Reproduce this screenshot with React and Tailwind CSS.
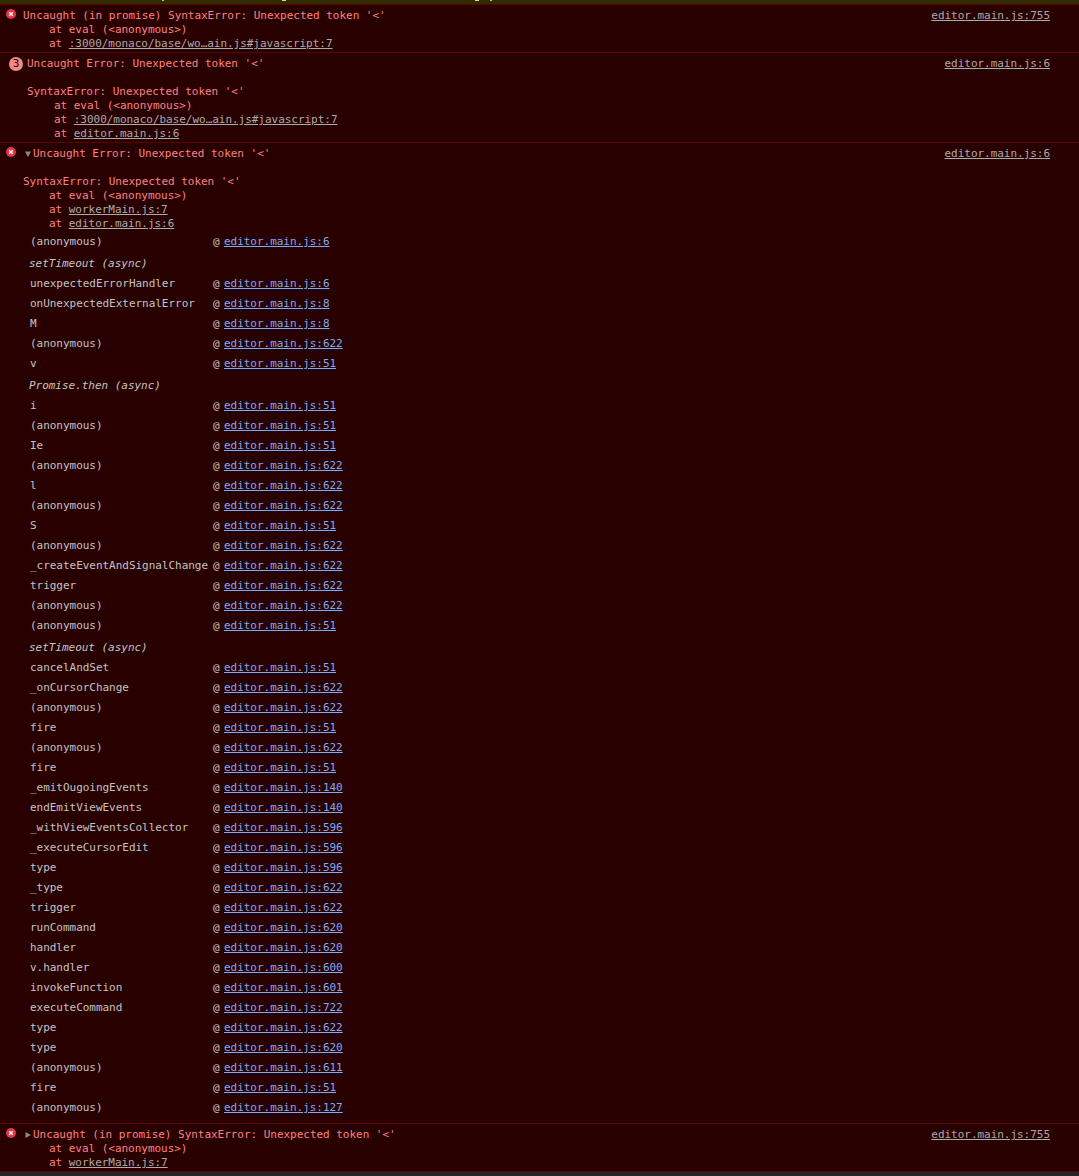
import React from "react";

const stack1 = [
  ["(anonymous)", "editor.main.js:6"],
  { async: "setTimeout (async)" },
  ["unexpectedErrorHandler", "editor.main.js:6"],
  ["onUnexpectedExternalError", "editor.main.js:8"],
  ["M", "editor.main.js:8"],
  ["(anonymous)", "editor.main.js:622"],
  ["v", "editor.main.js:51"],
  { async: "Promise.then (async)" },
  ["i", "editor.main.js:51"],
  ["(anonymous)", "editor.main.js:51"],
  ["Ie", "editor.main.js:51"],
  ["(anonymous)", "editor.main.js:622"],
  ["l", "editor.main.js:622"],
  ["(anonymous)", "editor.main.js:622"],
  ["S", "editor.main.js:51"],
  ["(anonymous)", "editor.main.js:622"],
  ["_createEventAndSignalChange", "editor.main.js:622"],
  ["trigger", "editor.main.js:622"],
  ["(anonymous)", "editor.main.js:622"],
  ["(anonymous)", "editor.main.js:51"],
  { async: "setTimeout (async)" },
  ["cancelAndSet", "editor.main.js:51"],
  ["_onCursorChange", "editor.main.js:622"],
  ["(anonymous)", "editor.main.js:622"],
  ["fire", "editor.main.js:51"],
  ["(anonymous)", "editor.main.js:622"],
  ["fire", "editor.main.js:51"],
  ["_emitOugoingEvents", "editor.main.js:140"],
  ["endEmitViewEvents", "editor.main.js:140"],
  ["_withViewEventsCollector", "editor.main.js:596"],
  ["_executeCursorEdit", "editor.main.js:596"],
  ["type", "editor.main.js:596"],
  ["_type", "editor.main.js:622"],
  ["trigger", "editor.main.js:622"],
  ["runCommand", "editor.main.js:620"],
  ["handler", "editor.main.js:620"],
  ["v.handler", "editor.main.js:600"],
  ["invokeFunction", "editor.main.js:601"],
  ["executeCommand", "editor.main.js:722"],
  ["type", "editor.main.js:622"],
  ["type", "editor.main.js:620"],
  ["(anonymous)", "editor.main.js:611"],
  ["fire", "editor.main.js:51"],
  ["(anonymous)", "editor.main.js:127"],
];

function ErrorIcon() {
  return (
    <svg width="10" height="10" viewBox="0 0 10 10" className="block shrink-0 ml-[6px] mr-[7px]">
      <circle cx="5" cy="5" r="5" fill="#e5354a" />
      <path d="M3.2 3.2l3.6 3.6M6.8 3.2l-3.6 3.6" stroke="#fff" strokeWidth="1.3" />
    </svg>
  );
}

function CountBadge({ count }) {
  return (
    <span className="shrink-0 ml-[9px] mr-[4px] size-[14px] rounded-full bg-[#f28b82] text-[#290000] text-center leading-[14px]">
      {count}
    </span>
  );
}

function SourceLink({ children }) {
  return <span className="underline text-[#ababab]">{children}</span>;
}

function Triangle({ open }) {
  return (
    <svg width="6" height="6" viewBox="0 0 6 6" className="block shrink-0 mx-[2px]">
      <path d={open ? "M0 0.5h6L3 6z" : "M0.5 0L6 3L0.5 6z"} fill="#8a8a8a" />
    </svg>
  );
}

function StackTable() {
  return (
    <div className="mt-px pl-[7px] flex flex-col">
      {stack1.map((row, i) =>
        row.async ? (
          <div key={i} className="h-[22px] leading-[24px] italic text-[#c4c4c4] -ml-px">
            {row.async}
          </div>
        ) : (
          <div key={i} className="h-[20px] leading-[20px] flex text-[#c4c4c4]">
            <span className="w-[183px] whitespace-pre">{row[0]}</span>
            <span className="w-[11px]">@</span>
            <span className="underline text-[#7cacf8]">{row[1]}</span>
          </div>
        ),
      )}
    </div>
  );
}

function Message({ icon, source, className = "pb-px", children }) {
  return (
    <div className={`shrink-0 flex items-start border-b border-[#5c0000] pt-[4px] pr-[29px] ${className}`}>
      {icon}
      <div className="flex-1 min-w-0">{children}</div>
      <SourceLink>{source}</SourceLink>
    </div>
  );
}

export default function App() {
  return (
    <div className="h-[1176px] w-full overflow-hidden bg-[#290000] text-[11px] leading-[14px] text-[#ff8080] flex flex-col font-['DejaVu_Sans_Mono',monospace] tracking-[-0.03px]">
      {/* clipped warning row above, only descenders of its text show */}
      <div className="h-[5px] shrink-0 bg-[#332b00] border-b border-[#5c0000]">
        <svg width="1079" height="1" className="block">
          <rect x="162" width="2" height="1" fill="#d8b860" />
          <rect x="282" width="4" height="1" fill="#f0d080" />
          <rect x="475" width="4" height="1" fill="#f0d080" />
          <rect x="490" width="2" height="1" fill="#d8b860" />
        </svg>
      </div>

      <Message icon={<ErrorIcon />} source="editor.main.js:755">
        <div>Uncaught (in promise) SyntaxError: Unexpected token '&lt;'</div>
        <div className="pl-[26px]">at eval (&lt;anonymous&gt;)</div>
        <div className="pl-[26px]">at <SourceLink>:3000/monaco/base/wo…ain.js#javascript:7</SourceLink></div>
      </Message>

      <Message icon={<CountBadge count={3} />} source="editor.main.js:6">
        <div>Uncaught Error: Unexpected token '&lt;'</div>
        <div className="h-[14px]" />
        <div>SyntaxError: Unexpected token '&lt;'</div>
        <div className="pl-[27px]">at eval (&lt;anonymous&gt;)</div>
        <div className="pl-[27px]">at <SourceLink>:3000/monaco/base/wo…ain.js#javascript:7</SourceLink></div>
        <div className="pl-[27px]">at <SourceLink>editor.main.js:6</SourceLink></div>
      </Message>

      {/* expanded error with stack */}
      <Message icon={<ErrorIcon />} source="editor.main.js:6" className="pb-[5px]">
        <div className="flex items-center">
          <Triangle open />
          <span>Uncaught Error: Unexpected token '&lt;'</span>
        </div>
        <div className="h-[14px]" />
        <div>SyntaxError: Unexpected token '&lt;'</div>
        <div className="pl-[26px]">at eval (&lt;anonymous&gt;)</div>
        <div className="pl-[26px]">at <SourceLink>workerMain.js:7</SourceLink></div>
        <div className="pl-[26px]">at <SourceLink>editor.main.js:6</SourceLink></div>
        <StackTable />
      </Message>

      <Message icon={<ErrorIcon />} source="editor.main.js:755">
        <div className="flex items-center">
          <Triangle />
          <span>Uncaught (in promise) SyntaxError: Unexpected token '&lt;'</span>
        </div>
        <div className="pl-[26px]">at eval (&lt;anonymous&gt;)</div>
        <div className="pl-[26px]">at <SourceLink>workerMain.js:7</SourceLink></div>
      </Message>

      <div className="flex-1 bg-[#242424]" />
    </div>
  );
}
